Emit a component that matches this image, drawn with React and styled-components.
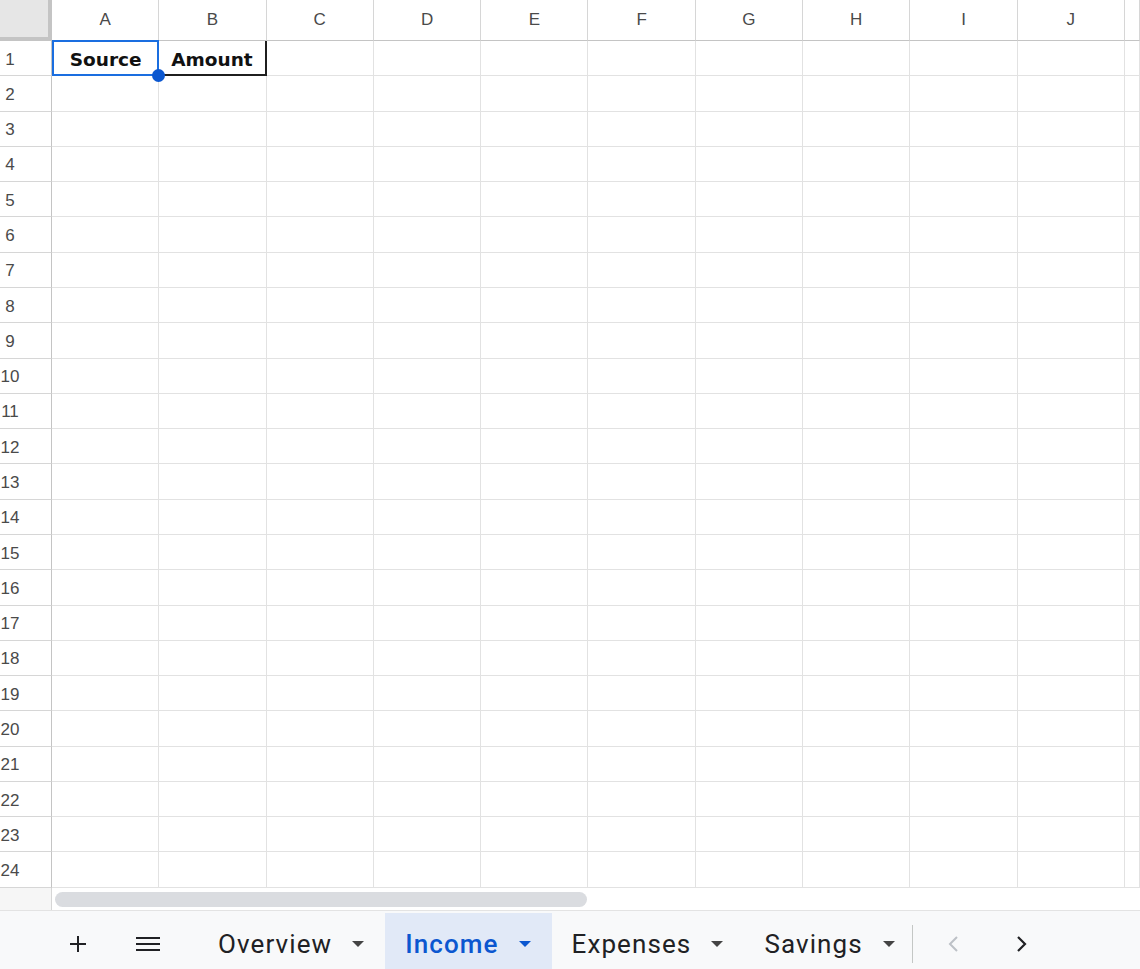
import React from 'react';
import styled, { createGlobalStyle } from 'styled-components';

const GlobalStyle = createGlobalStyle`
  html, body {
    margin: 0;
    padding: 0;
    background: #fff;
    overflow: hidden;
  }
`;

const columns = ['A', 'B', 'C', 'D', 'E', 'F', 'G', 'H', 'I', 'J', ''];
const rows = Array.from({ length: 24 }, (_, i) => i + 1);

const cellText = {
  '1-A': 'Source',
  '1-B': 'Amount',
};

function App() {
  return (
    <Page>
      <GlobalStyle />
      <Grid>
        <Corner />
        {columns.map((c, i) => (
          <ColHeader key={'h' + i}>{c}</ColHeader>
        ))}
        {rows.map((r) => (
          <React.Fragment key={r}>
            <RowHeader>
              <span>{r}</span>
            </RowHeader>
            {columns.map((c, i) => {
              const key = `${r}-${c}`;
              return (
                <Cell
                  key={key}
                  $selected={key === '1-A'}
                  $outlined={key === '1-B'}
                >
                  {cellText[key] && <Bold>{cellText[key]}</Bold>}
                  {key === '1-A' && <Handle />}
                </Cell>
              );
            })}
          </React.Fragment>
        ))}
      </Grid>

      <ScrollRow>
        <ScrollCorner />
        <ScrollTrack>
          <Thumb />
        </ScrollTrack>
      </ScrollRow>

      <TabBar>
        <IconButton aria-label="Add sheet">
          <svg width="22" height="22" viewBox="0 0 22 22">
            <path d="M11 3v16M3 11h16" stroke="#202124" strokeWidth="2" />
          </svg>
        </IconButton>
        <IconButton aria-label="All sheets">
          <svg width="26" height="22" viewBox="0 0 26 22">
            <path d="M1 5h24M1 11h24M1 17h24" stroke="#202124" strokeWidth="2.2" />
          </svg>
        </IconButton>
        <Tabs>
          {['Overview', 'Income', 'Expenses', 'Savings'].map((t) => (
            <Tab key={t} $active={t === 'Income'}>
              <span>{t}</span>
              <Caret $active={t === 'Income'} />
            </Tab>
          ))}
        </Tabs>
        <Divider />
        <NavButton $disabled aria-label="Previous">
          <svg width="14" height="22" viewBox="0 0 14 22">
            <path d="M10 4L3 11l7 7" fill="none" stroke="#bdc1c6" strokeWidth="2" />
          </svg>
        </NavButton>
        <NavButton aria-label="Next">
          <svg width="14" height="22" viewBox="0 0 14 22">
            <path d="M4 4l7 7-7 7" fill="none" stroke="#202124" strokeWidth="2.2" />
          </svg>
        </NavButton>
      </TabBar>
    </Page>
  );
}

export default App;

const Page = styled.div`
  width: 1140px;
  height: 969px;
  display: flex;
  flex-direction: column;
  overflow: hidden;
  font-family: "Liberation Sans", Arial, sans-serif;
`;

const Grid = styled.div`
  display: grid;
  grid-template-columns: 52px repeat(10, 107.3px) 1fr;
  grid-template-rows: 41px repeat(24, 35.29px);
  height: 888px;
  flex: none;
`;

const Corner = styled.div`
  background: #e6e6e6;
  border-right: 4px solid #c4c4c4;
  border-bottom: 4px solid #c4c4c4;
  box-sizing: border-box;
  width: 52px;
`;

const ColHeader = styled.div`
  display: flex;
  align-items: center;
  justify-content: center;
  border-right: 1px solid #d6d6d6;
  border-bottom: 1px solid #c4c4c4;
  color: #4a4a4a;
  font-size: 17px;
  padding-bottom: 1px;
`;

const RowHeader = styled.div`
  display: flex;
  align-items: center;
  border-right: 1px solid #c4c4c4;
  border-bottom: 1px solid #d6d6d6;
  color: #4a4a4a;
  font-size: 17px;
  padding-top: 3px;

  span {
    width: 20px;
    text-align: center;
  }
`;

const Cell = styled.div`
  position: relative;
  display: flex;
  align-items: center;
  justify-content: center;
  padding-top: 3px;
  border-right: 1px solid #e2e2e2;
  border-bottom: 1px solid #e2e2e2;
  ${({ $selected }) =>
    $selected &&
    `
    border: 2px solid #1a6ee0;
    margin: -1px 0 0 0;
  `}
  ${({ $outlined }) =>
    $outlined &&
    `
    border-right: 2px solid #1f1f1f;
    border-bottom: 2px solid #1f1f1f;
  `}
`;

const Bold = styled.span`
  font-family: "DejaVu Sans", Verdana, sans-serif;
  font-weight: bold;
  font-size: 18.5px;
  color: #111;
`;

const Handle = styled.div`
  position: absolute;
  right: -8px;
  bottom: -8px;
  width: 13px;
  height: 13px;
  border-radius: 50%;
  background: #0b57d0;
  z-index: 2;
`;

const ScrollRow = styled.div`
  display: flex;
  height: 22px;
  flex: none;
`;

const ScrollCorner = styled.div`
  width: 52px;
  background: #f6f6f6;
  border-right: 1px solid #d6d6d6;
  box-sizing: border-box;
`;

const ScrollTrack = styled.div`
  flex: 1;
  padding: 4px 3px 3px 3px;
  background: #fff;
`;

const Thumb = styled.div`
  width: 532px;
  height: 15px;
  border-radius: 8px;
  background: #dadce0;
`;

const TabBar = styled.div`
  flex: 1;
  display: flex;
  align-items: stretch;
  background: #f8f9fa;
  border-top: 1px solid #e3e3e3;
  padding-top: 2px;
  padding-left: 57px;
  font-family: Roboto, "Noto Sans", sans-serif;
`;

const IconButton = styled.div`
  width: 42px;
  margin-right: 28px;
  display: flex;
  align-items: center;
  justify-content: center;
  padding-top: 6px;
`;

const Tabs = styled.div`
  display: flex;
  margin-left: 1px;
`;

const Tab = styled.div`
  display: flex;
  align-items: center;
  gap: 20px;
  padding: 6px 21px 0 20px;
  font-size: 26px;
  letter-spacing: 1.1px;
  color: ${({ $active }) => ($active ? '#0b57d0' : '#202124')};
  background: ${({ $active }) => ($active ? '#e1e9f7' : 'transparent')};
  font-weight: ${({ $active }) => ($active ? 500 : 400)};

  &:last-child {
    padding-right: 17px;
  }
`;

const Caret = styled.span`
  width: 0;
  height: 0;
  border-left: 6px solid transparent;
  border-right: 6px solid transparent;
  border-top: 6px solid ${({ $active }) => ($active ? '#0b57d0' : '#444')};
`;

const Divider = styled.div`
  width: 1px;
  background: #c4c7c5;
  margin: 12px 0 6px 0;
`;

const NavButton = styled.div`
  width: 67px;
  display: flex;
  align-items: center;
  justify-content: center;
  padding-top: 6px;
  margin-left: ${({ $disabled }) => ($disabled ? '8px' : '0')};
`;
